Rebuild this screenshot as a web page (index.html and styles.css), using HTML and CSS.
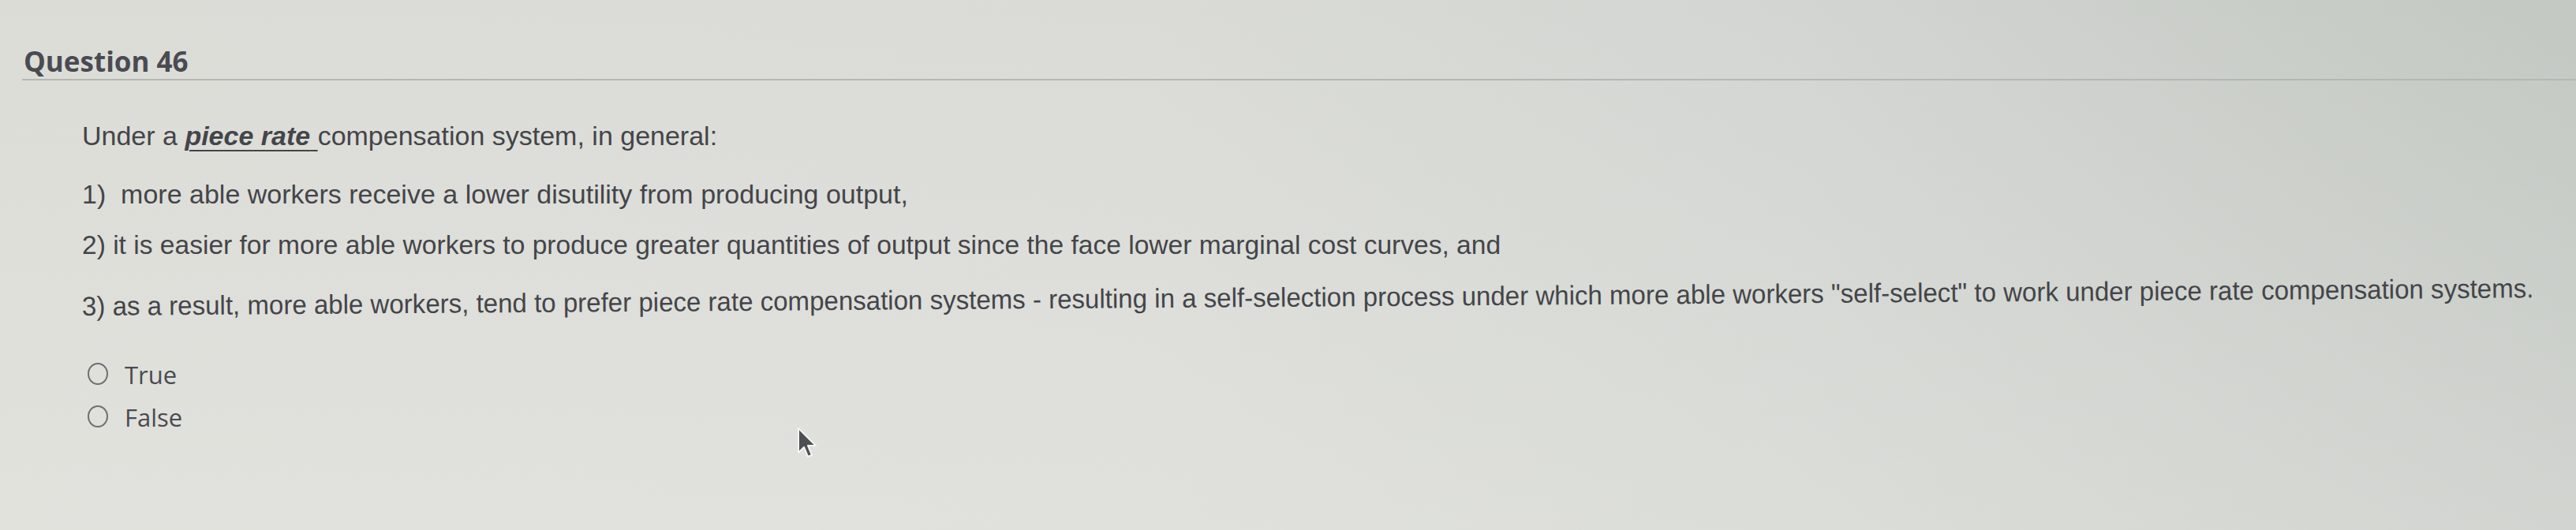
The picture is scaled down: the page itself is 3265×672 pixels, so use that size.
FILE: index.html
```html
<!DOCTYPE html>
<html>
<head>
<meta charset="utf-8">
<title>Question 46</title>
<link rel="stylesheet" href="styles.css">
</head>
<body>
<div class="page">
  <div class="question">
    <h2 class="q-title">Question 46</h2>
    <div class="q-body">
      <p class="q-line">Under a <span class="key"><b><i>piece rate</i></b> </span>compensation system, in general:</p>
      <p class="q-line q-tight">1)&nbsp; more able workers receive a lower disutility from producing output,</p>
      <p class="q-line q-second">2) it is easier for more able workers to produce greater quantities of output since the face lower marginal cost curves, and</p>
      <p class="q-line q-last">3) as a result, more able workers, tend to prefer piece rate compensation systems - resulting in a self-selection process under which more able workers "self-select" to work under piece rate compensation systems.</p>
      <div class="answers">
        <label class="answer"><span class="radio"></span><span class="answer-text">True</span></label>
        <label class="answer"><span class="radio"></span><span class="answer-text">False</span></label>
      </div>
    </div>
  </div>
  <svg class="cursor" width="26" height="42" viewBox="0 0 26 42">
    <path d="M2 2 L2 33 L9 26 L14 38 L19 36 L14 24 L24 24 Z" fill="#4e4f52" stroke="#f4f4f2" stroke-width="2" stroke-linejoin="round"/>
  </svg>
</div>
</body>
</html>
```
FILE: styles.css
```css
html, body {
  margin: 0;
  padding: 0;
}
body {
  width: 3265px;
  height: 672px;
  overflow: hidden;
}
.page {
  position: relative;
  width: 3265px;
  height: 672px;
  background:
    linear-gradient(to bottom, rgba(255,255,255,0) 0%, rgba(236,236,232,0.35) 100%),
    linear-gradient(to right, #dcdcd7 0%, #dadbd7 45%, #d2d5d1 70%, #c9cdc8 88%, #c3c8c3 100%);
}
.question {
  padding-top: 56px;
}
.q-title {
  margin: 0 0 0 28px;
  padding-left: 2px;
  font-family: "Open Sans", sans-serif;
  font-weight: 700;
  font-size: 35px;
  line-height: 44px;
  color: #4a4b52;
  border-bottom: 2px solid #b4b8b4;
}
.q-body {
  padding-left: 104px;
  padding-top: 50px;
}
.q-line {
  margin: 0 0 34px 0;
  font-family: "Liberation Sans", Arial, sans-serif;
  font-size: 34px;
  line-height: 40px;
  color: #444549;
  white-space: nowrap;
}
.q-tight {
  margin-bottom: 24px;
}
.q-second {
  transform: scaleX(0.987);
  transform-origin: left center;
  margin-bottom: 38px;
}
.q-last {
  margin-bottom: 47px;
  transform: rotate(-0.42deg) scaleX(0.972);
  transform-origin: left center;
}
.key {
  text-decoration: underline;
  text-decoration-thickness: 2px;
  text-underline-offset: 6px;
}
.answers {
  display: flex;
  flex-direction: column;
  gap: 14px;
  padding-left: 7px;
}
.answer {
  display: flex;
  align-items: center;
  gap: 21px;
  height: 40px;
}
.radio {
  width: 26px;
  height: 28px;
  border: 2.5px solid #6e6f73;
  border-radius: 50%;
  box-sizing: border-box;
  margin-top: -2px;
}
.answer-text {
  font-family: "Open Sans", sans-serif;
  font-size: 31px;
  line-height: 40px;
  color: #4a4b50;
}
.cursor {
  position: absolute;
  left: 1010px;
  top: 541px;
}
```
